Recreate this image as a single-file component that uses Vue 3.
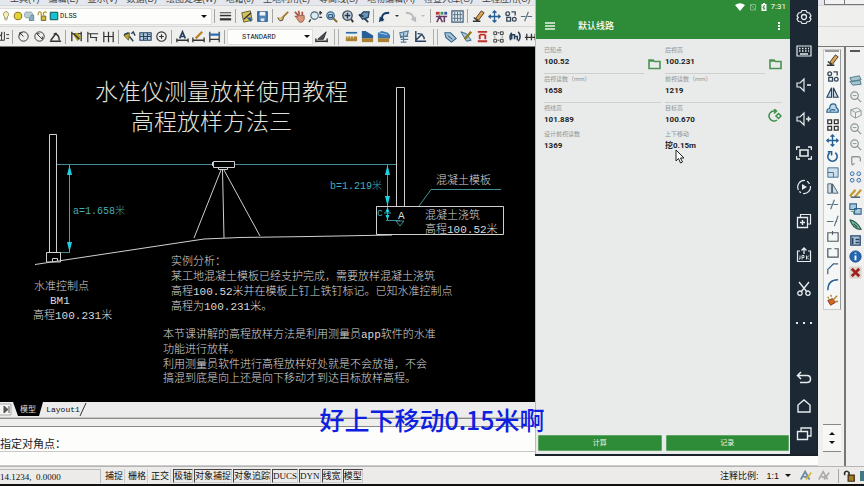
<script setup>
import { ref, h } from 'vue'

const N = '#27405e'
const K = '#333333'
const B = '#2f6da8'
const G = '#8f9698'
const Y = '#b39b3a'
const W = '#e6ebee'

// Each icon is a list of [path, stroke, fill, stroke width] on a 16 x 16 grid.
const icons = {
  angle: [['M2 12 8 4M1 12H10M7 12V3M10 3V12M12 6H15M12 10H15', K]],
  circle: [['M8 3A5 5 0 1 1 8 13 5 5 0 1 1 8 3M4 4 8 8M4 4H7M4 4V7', K]],
  diameter: [['M8 3A5 5 0 1 1 8 13 5 5 0 1 1 8 3M5 5 11 11M5 5H8M11 11V8', K]],
  arcangle: [['M2 13H14M3 12 9 4M6 5Q12 5 12 12', K, 'none', 1.5]],
  quick: [['M3 3V13M13 3V13M3 5H13', K, 'none', 1.4], ['M4 5 9 4 13 9 9 13Z', 'none', '#b4a322'], ['M5 5 11 11', K, 'none', 1.4]],
  base: [['M3 3V14M3 5H14M6 5V9H13M12 9V13', K, 'none', 1.2]],
  cont: [['M3 3V14M8 3V14M13 3V14M3 8H13', K, 'none', 1.3]],
  leader: [['M2 7 8 4 7 12Z', '#68651e', '#c1a72e'], ['M8 8 12 13M10 5 12 3 14 7M2 6 7 4', N, 'none', 1.5]],
  tol: [['M2 4H14V12H2ZM2 8H14M6 4V12M10 4V12', N, '#b9d3eb', 1.2], ['M4 6H5M11 6H13M7 10H9', N]],
  center: [['M8 3A5 5 0 1 1 8 13 5 5 0 1 1 8 3M8 5.500V10.500M5.500 8H10.500', K, 'none', 1.2]],
  dimtext: [['M5 10 8 3 11 10M6 8H10', N, 'none', 1.8], ['M2 10V14M14 10V14M2 12H14', K, 'none', 1.4]],
  dimedit: [['M2 9V14M14 9V14M2 12H14', K, 'none', 1.4], ['M5 10 12 3', '#b98328', 'none', 2.4]],
  dimup: [['M3 3V14M13 3V14M3 11H13', K, 'none', 1.3], ['M2 6H14', B, 'none', 2.4]],
  dimstyle: [['M2 10V14M14 10V14M2 13H14', K, 'none', 1.5], ['M4 11 13 3 10 11Z', K, '#454b4f']],
  ruler: [['M2 4H14', B, 'none', 1.8], ['M2 8H14V13H2Z', 'none', '#aa8232'], ['M4 8V10M7 8V10M10 8V10', '#f1e0a0']],
  area: [['M2 2 6 2 14 7V10H2Z', 'none', '#245f98'], ['M2 10H14V14H2Z', 'none', '#aa8232']],
  volume: [['M2 4 6 2 13 4 15 7V10H2Z', 'none', '#3a79b1'], ['M3 4 12 6', '#abd0ed'], ['M2 10H14V14H2Z', 'none', '#aa8232']],
  list: [['M3 4 12 2 11 7 4 9ZM4 8H12M4 11H12M7 3V13M4 14H10', '#4e7895', '#b7ccdb', 1.2]],
  locate: [['M3 2V13H14M3 12 10 5M5 5A6 6 0 0 1 12 11', N, 'none', 1.5]],
  tag: [['M2 4 8 4 14 10 9 14 3 9Z', '#33658c', '#a7c5da', 1.2], ['M5 7 10 11', N]],
  tagpen: [['M2 3 8 5 13 12 8 13Z', '#33658c', '#a7c5da'], ['M6 11 13 3', '#8f771b', 'none', 2.4]],
  column: [['M3 3H13M5 6H11M5 6V11M11 6V11M3 13H13', '#bd3328', '#e68b7a', 2]],
  block: [['M3 3H6V6H3ZM10 3H13V6H10ZM3 11H6V14H3ZM10 11H13V14H10ZM7 4H9M7 12H9M4 8V9M12 8V9', K]],
  curl: [['M5 4Q2 8 4 12M12 3Q16 8 12 13M5 11V6H8V11M8 8H11V12', N, 'none', 1.6]],
  stretch: [['M2 9H14M4 5V12M9 5V12M13 5V12', K, 'none', 1.4]],
  ltype: [['M2 4H14', K], ['M2 7H14', K, 'none', 1.6], ['M2 11H14', K, 'none', 2.4]],
  note: [['M3 4 12 2 14 12 5 14Z', '#675f2c', '#d4c25a'], ['M5 11 13 4', '#333', 'none', 1.4], ['M8 9 13 14V9Z', 'none', '#2e5f8f']],
  save: [['M3 3H13V13H3Z', '#204f83', '#5185b8', 1.2], ['M5 3H11V7H5Z', 'none', '#eff5fa'], ['M6 10H10V13H6Z', 'none', '#dce8f2']],
  brush: [['M6 10 13 3', '#a5772c', 'none', 2], ['M2 9Q3 14 7 12L8 9', '#4d453a', '#dfba69']],
  pan: [['M3 3 7 7M7 2 8 6M3 8H7M11 3V8', '#a8523f', 'none', 1.8], ['M6 7H13V11L11 14H8L5 10Z', '#9d644d', '#d9967a']],
  zoomrt: [['M7 3A4 4 0 1 1 7 11 4 4 0 1 1 7 3', '#48677e', '#dfe9f0', 1.2], ['M3 11 1 14M12 4H15M13 2V6M12 9H15', K, 'none', 1.4]],
  zoomwin: [['M7 3A4 4 0 1 1 7 11 4 4 0 1 1 7 3', '#386a92', '#bad3e6', 1.3], ['M5 6H9V9H5Z', '#1c4063'], ['M10 10 14 14', '#8c6628', 'none', 2]],
  zoomext: [['M8 2A5 5 0 1 1 8 12 5 5 0 1 1 8 2', '#3e4b55', '#c1cfda', 1.4], ['M8 4V10M5 7H11', '#203850', 'none', 1.5], ['M12 11 14 14', K, 'none', 2]],
  zoomprev: [['M4 7 8 3 14 3 13 9 7 11Z', N, '#6994ba', 1.3], ['M3 6 8 8M9 10 13 14', '#203b57', 'none', 1.8]],
  undo: [['M6 13Q3 4 13 4', '#183963', 'none', 2], ['M3 8 2 14 8 11Z', 'none', '#183963']],
  redo: [['M3 4Q12 4 11 12', '#b7bbbd', 'none', 2], ['M8 11 14 14 14 8Z', 'none', '#b7bbbd']],
  props: [['M2 3H6V6H2Z', 'none', '#c23936'], ['M7 3H10V6H7Z', 'none', '#3c9a4e'], ['M11 3H14V6H11Z', 'none', '#364faa'], ['M2 8H14M3 14 6 8 9 14M11 8V14', '#653b65', 'none', 1.7]],
  grid: [['M2 2H14V14H2Z', '#405c71', '#dce6ed', 1.2], ['M5 3V13M8 3V13M11 3V13M3 6H13M3 10H13', '#58758a']],
  erase: [['M5 10 11 2 14 4 8 12Z', '#4b3926', '#d9a555'], ['M2 13H10M3 9 8 13', '#353535', 'none', 1.5]],
  move: [['M8 2V14M2 8H14M6 4 8 2 10 4M6 12 8 14 10 12M4 6 2 8 4 10M12 6 14 8 12 10', '#285f93', 'none', 1.4]],
  copy: [['M5 3A2 2 0 1 1 5 7 2 2 0 1 1 5 3M12 9A2 2 0 1 1 12 13 2 2 0 1 1 12 9M4 9H8V13H4ZM9 3H13V7', '#38495b', 'none', 1.4]],
  trim: [['M2 8H7M9 8H14M10 3 6 13', '#58707f', 'none', 1.2]],
  extend: [['M2 9H9M11 9H13M14 3 10 14', '#58707f', 'none', 1.2]],
  mirror: [['M2 13 7 3V13ZM14 13 9 3V13Z', N, '#c6dae9', 1.2]],
  offset: [['M2 12Q2 8 5 8 5 3 9 3 12 3 12 7 15 9 14 12ZM5 11Q7 8 11 10', '#2a638e', '#bed8e8', 1.3]],
  array: [['M3 3H7V7H3ZM10 3H14V7H10ZM3 10H7V14H3ZM10 10H14V14H10Z', K, 'none', 1.4]],
  rotate: [['M5 4A5 5 0 1 0 11 4M3 3H7V7', '#285f93', 'none', 1.7]],
  scale: [['M3 3H14V13H3ZM3 8H9V13', '#486f8c', '#cae0ef']],
  shear: [['M3 3V13H7V3ZM8 3 14 13H8Z', '#4c6170', '#cfdde8']],
  break1: [['M3 4H14V13H3ZM8 2V6', '#4c5960', 'none', 1.2]],
  break2: [['M7 4H3V13H14V4H10', '#4c5960', 'none', 1.3]],
  chamfer: [['M3 14V9L9 3H14', '#536068', 'none', 1.3], ['M3 9 9 3', B]],
  fillet: [['M3 14Q3 3 14 3', '#285f93', 'none', 1.5]],
  explode: [['M3 8 8 6 11 10 6 13Z', '#803316', '#d56923'], ['M9 7 13 3M11 9H14M7 4 6 2M4 6 3 4', '#b48524', 'none', 1.5]],
  layers: [['M2 5 12 3 14 7 4 9ZM2 9 13 8 14 12 5 13Z', '#4c7c8b', '#a9c4cf']],
  glass: [['M7 3A4 4 0 1 1 7 11 4 4 0 1 1 7 3M10 10 14 14', G, '#eef0f0', 1.3], ['M5 7H9', G]],
  cube: [['M3 5 10 3 14 6 8 8ZM3 5V11L8 14V8M8 14 14 11V6', G, '#eceeee']],
  turn: [['M4 4V12M4 4H11Q14 4 13 9M7 11 4 13', G, 'none', 1.4]],
  nodes: [['M2.500 5A2 2 0 1 1 6.500 5 2 2 0 1 1 2.500 5M9.500 5A2 2 0 1 1 13.500 5 2 2 0 1 1 9.500 5M2.500 12A2 2 0 1 1 6.500 12 2 2 0 1 1 2.500 12M9.500 12A2 2 0 1 1 13.500 12 2 2 0 1 1 9.500 12', '#356995', '#dceaf5']],
  pens: [['M2 12 8 5M7 13 14 5', '#c59b37', 'none', 2.5], ['M3 13H13', '#345c7e', 'none', 1.5]],
  windows: [['M2 3H9V9H2ZM7 8H14V14H7Z', '#39678a', '#a8cbe0', 1.2], ['M3 11H6V14', '#393']],
  eye: [['M2 3Q9 4 14 13 6 14 2 3M6 7 10 11', '#28604e', '#8dbd9f', 1.3]],
  panel: [['M3 3H13V13H3Z', '#2b456a', '#abc4dc', 1.4], ['M5 5V12M8 7H12M8 10H12', '#28405a', 'none', 1.6]],
  info: [['M8 2A6 6 0 1 1 8 14 6 6 0 1 1 8 2', '#164f92', '#2367b0'], ['M8 7V12M8 4V5', '#fff', 'none', 2]],
  cross: [['M2 2H14V14H2Z', '#ddd6cf', '#ddd6cf'], ['M4 4 12 12M12 4 4 12', '#9f231e', 'none', 3]],
  bulb: [['M8 2A4 4 0 0 1 10 9V11H6V9A4 4 0 0 1 8 2M6 13H10', '#857c62', '#f4f1ad']],
  sun: [['M8 3A5 5 0 1 1 8 13 5 5 0 1 1 8 3', '#8d7922', '#e4d335', 1.5]],
  freeze: [['M6 3A4 4 0 1 1 6 10 4 4 0 1 1 6 3', '#7699a0', '#b9cdd1'], ['M9 7H13V14H7V10', '#587a87', '#8aabb6']],
  unlock: [['M7 8H13V14H7Z', '#6b6228', '#d0bb3c', 1.2], ['M3 7V4Q5 1 7 4V8M10 7V4Q13 1 14 4', Y, 'none', 1.7]],
  swatch: [['M3 3H13V13H3Z', '#174b50', '#12c4cf', 1.3]],
  annot: [['M2 12 7 3 12 12M5 9H10', '#698aa7', 'none', 2], ['M8 12 14 4', '#d5b32e', 'none', 2]],
  annot2: [['M2 12 7 3 12 12M5 9H10M8 12 14 4', '#aaa', 'none', 1.8]],
  lock: [['M7 7H14V14H7Z', '#3b2e17', '#a47c22', 1.4], ['M3 7V4Q5 1 8 4V7', '#2f2c25', 'none', 1.8]],
  gear: [['M6 1.500H10L11 3.500 13.500 4 15 7 13.700 8.500 15 10 13.500 12.500 11 12.700 10 14.500H6L5 12.700 2.500 12.500 1 10 2.300 8.500 1 7 2.500 4 5 3.500Z', W, 'none', 1.2], ['M8 5.500A2.500 2.500 0 1 1 8 10.500 2.500 2.500 0 1 1 8 5.500', W, 'none', 1.3]],
  keyboard: [['M1 3H15V13H1Z', W, 'none', 1.2], ['M3 5.500H4.500M6 5.500H7.500M9 5.500H10.500M12 5.500H13M3 8H4.500M6 8H7.500M9 8H10.500M12 8H13M4 11H12', W, 'none', 1.3]],
  voldown: [['M1 6H4L8 2V14L4 10H1Z', W, 'none', 1.2], ['M11 8H15', W, 'none', 1.6]],
  volup: [['M1 6H4L8 2V14L4 10H1Z', W, 'none', 1.2], ['M10 8H15M12.500 5.500V10.500', W, 'none', 1.6]],
  full: [['M0.500 5V2H4M12 2H15.500V5M15.500 11V14H12M4 14H0.500V11', W, 'none', 1.5], ['M4 5H12V11H4Z', W, 'none', 1.6]],
  play: [['M2.500 11A6.500 6.500 0 0 1 9 1.500M11 2.200A6.500 6.500 0 0 1 13.500 5M14.400 7A6.500 6.500 0 0 1 7 14.500M5 13.800 3.300 12.500', W, 'none', 1.2], ['M6 5 11 8 6 11Z', 'none', W]],
  add: [['M4.500 4V1.500H14.500V11H12', W, 'none', 1.2], ['M1.500 4.500H11.500V14.500H1.500Z', W, 'none', 1.3], ['M4 9.500H9M6.500 7V12', W, 'none', 1.5]],
  install: [['M4 4H1.500V14.500H14.500V4H12', W, 'none', 1.2], ['M8 7V1M5.500 3.500 8 1 10.500 3.500', W, 'none', 1.3], ['M4 8.500V12H2.800M6 12.500V8.500H8V10.500H6M10.500 8.500V12.500M13 8.500 11 10.500 13 12.500', W, 'none', 0.9]],
  cut: [['M3 1 11 11M13 1 5 11', W, 'none', 1.4], ['M4 10A2.200 2.200 0 1 1 3.900 10ZM12 10A2.200 2.200 0 1 1 11.900 10Z', W, 'none', 1.3]],
  more: [['M0 7H2V9H0ZM7 7H9V9H7ZM14 7H16V9H14Z', 'none', W]],
  back: [['M5 2 1.500 5.500 5 9M2 5.500H11Q14.500 5.500 14.500 9T11 12.500H4', W, 'none', 1.5]],
  home: [['M2 14V7L8 2 14 7V14Z', W, 'none', 1.4]],
  recent: [['M5 5V2H15V10H12', W, 'none', 1.3], ['M1.500 5.500H11.500V13.500H1.500Z', W, 'none', 1.4]],
}

const Icon = (props) =>
  h(
    'svg',
    { class: 'ic', viewBox: '0 0 16 16', width: 16, height: 16, 'aria-hidden': 'true' },
    icons[props.name].map(([d, stroke, fill, w]) =>
      h('path', { d, stroke, fill: fill || 'none', 'stroke-width': w || 1 })
    )
  )
Icon.props = ['name']

const menus = ['工具(T)', '编辑(E)', '显示(V)', '数据(D)', '绘图处理(W)', '地籍(J)', '土地利用(L)', '等高线(S)', '地物编辑(A)', '检查入库(G)', '工程应用(C)', '其他应用(M)']
const rowOneA = [['ltype'], ['note', 'save'], ['brush', 'pan', 'zoomrt', 'zoomwin', 'zoomext', 'zoomprev']]
const rowOneB = [['props', 'grid'], ['erase', 'move', 'copy', 'trim']]
const rowTwoA = [['angle'], ['circle', 'diameter', 'arcangle'], ['quick', 'base', 'cont'], ['leader', 'tol', 'center'], ['dimtext', 'dimedit', 'dimup']]
const measure = [['ruler', 'area', 'volume'], ['list', 'locate']]
const modify = ['tag', 'tagpen', 'column', 'block', 'curl', 'stretch']
const editTools = ['erase', 'copy', 'mirror', 'offset', 'array', 'move', 'rotate', 'scale', 'shear', 'trim', 'extend', 'break1', 'break2', 'chamfer', 'fillet', 'explode']
const viewTools = ['layers', 'glass', 'cube', 'glass', 'glass', 'turn', 'nodes', 'pens', 'windows', 'eye', 'panel', 'info', 'cross']
const toggles = [
  ['捕捉', false], ['栅格', false], ['正交', false], ['极轴', true], ['对象捕捉', true],
  ['对象追踪', true], ['DUCS', true], ['DYN', true], ['线宽', true], ['模型', true],
]
const dock = ['gear', 'keyboard', 'voldown', 'volup', 'full', 'play', 'add', 'install', 'cut', 'more']
const nav = ['back', 'home', 'recent']

const fields = ref([
  { id: 'known', label: '已知点', value: '100.52', icon: 'folder', line: true },
  { id: 'back-h', label: '后视高', value: '100.231', icon: 'folder', line: true },
  { id: 'back-r', label: '后视读数（mm）', value: '1658', line: true },
  { id: 'fore-r', label: '前视读数（mm）', value: '1219', line: true },
  { id: 'sight', label: '视线高', value: '101.889' },
  { id: 'target', label: '目标高', value: '100.670', icon: 'refresh' },
  { id: 'design', label: '设计前视读数', value: '1369' },
  { id: 'shift', label: '上下移动', value: '挖0.15m' },
])
const command = ref('')
</script>

<template>
  <div class="desktop">
    <div class="cad">
      <nav class="menu">
        <span v-for="m in menus" :key="m">{{ m }}</span>
        <i class="panes"></i>
      </nav>

      <div class="bar bar-one">
        <div class="layer">
          <Icon name="bulb" /><Icon name="sun" /><Icon name="freeze" /><Icon name="unlock" /><Icon name="swatch" />
          <select aria-label="图层"><option>DLSS</option></select>
          <i class="caret"></i>
        </div>
        <template v-for="(g, i) in rowOneA" :key="'a' + i">
          <i class="sep"></i>
          <button v-for="n in g" :key="n" class="tool" :aria-label="n"><Icon :name="n" /></button>
        </template>
        <i class="sep"></i>
        <button class="tool" aria-label="放弃"><Icon name="undo" /></button>
        <span class="drop"><i class="caret small"></i></span>
        <button class="tool" aria-label="重做"><Icon name="redo" /></button>
        <span class="drop"><i class="caret small dim"></i></span>
        <template v-for="(g, i) in rowOneB" :key="'b' + i">
          <i class="sep"></i>
          <button v-for="n in g" :key="n" class="tool" :aria-label="n"><Icon :name="n" /></button>
        </template>
      </div>

      <div class="bar bar-two">
        <template v-for="(g, i) in rowTwoA" :key="'c' + i">
          <i v-if="i" class="sep"></i>
          <button v-for="n in g" :key="n" class="tool" :aria-label="n"><Icon :name="n" /></button>
        </template>
        <i class="sep"></i>
        <div class="style-box">
          <select aria-label="标注样式"><option>STANDARD</option></select>
          <i class="caret"></i>
        </div>
        <button class="tool" aria-label="dimstyle"><Icon name="dimstyle" /></button>
        <i class="grip"></i>
        <template v-for="(g, i) in measure" :key="'d' + i">
          <i v-if="i" class="sep"></i>
          <button v-for="n in g" :key="n" class="tool" :aria-label="n"><Icon :name="n" /></button>
        </template>
        <i class="grip"></i>
        <button v-for="n in modify" :key="n" class="tool" :aria-label="n"><Icon :name="n" /></button>
      </div>

      <div class="body">
        <div class="work">
          <div class="canvas">
            <svg class="drawing" width="536" height="355" viewBox="0 47 536 355">
              <g class="sight">
                <path d="M57 164.500H213M235 164.500H396M57 252.500H70M376 206.500H388M386 220.500H400" />
                <path d="M396 221 404 221 400 226ZM419 206 431 189.500H501" />
              </g>
              <g class="arrow">
                <path d="M69.500 165V252M387.500 165V220M384 213H391" />
                <path class="head" d="M69.500 165 72 175H67ZM69.500 252 72 242H67ZM387.500 165 390 175H385ZM387.500 206 390 196H385ZM387.500 207 389.500 212H385.500ZM387.500 220 389.500 215H385.500Z" />
              </g>
              <g class="ink">
                <path d="M49.500 252V134.500H56.500V252M46.500 252.500H60.500V262H46.500ZM52.500 262V258.500H57.500V261" />
                <path d="M396.500 206V87.500H404.500V206M376.500 206.500H503.500V234.500H376.500Z" />
                <path d="M213.500 161.500H234.500V167.500H213.500ZM212.500 162V166M218.500 167.500V169.500H227.500V167.500" />
                <path d="M221 170 194 238M222.500 170 224 238M224 170 260 236" />
                <path d="M35 264.500 204 239 240 237.500 310 236.500 392 235" />
              </g>
              <g class="title">
                <text x="95" y="100">水准仪测量放样使用教程</text>
                <text x="131" y="130">高程放样方法三</text>
              </g>
              <g class="dim">
                <text x="73" y="214">a=1.658米</text>
                <text x="330" y="189">b=1.219米</text>
                <text x="377" y="216">c</text>
              </g>
              <g class="note">
                <text x="398" y="219">A</text>
                <text x="436" y="184">混凝土模板</text>
                <text x="425" y="219">混凝土浇筑</text>
                <text x="425" y="233">高程100.52米</text>
                <text x="34" y="290">水准控制点</text>
                <text x="50" y="304">BM1</text>
                <text x="33" y="319">高程100.231米</text>
                <text x="171" y="265">实例分析：</text>
                <text x="171" y="280">某工地混凝土模板已经支护完成，需要放样混凝土浇筑</text>
                <text x="171" y="295">高程100.52米并在模板上钉上铁钉标记。已知水准控制点</text>
                <text x="171" y="310">高程为100.231米。</text>
                <text x="163" y="338">本节课讲解的高程放样方法是利用测量员app软件的水准</text>
                <text x="163" y="353">功能进行放样。</text>
                <text x="163" y="368">利用测量员软件进行高程放样好处就是不会放错，不会</text>
                <text x="163" y="382">搞混到底是向上还是向下移动才到达目标放样高程。</text>
              </g>
            </svg>
          </div>
          <div class="tabs">
            <svg class="strip" width="90" height="15" viewBox="0 0 90 15" aria-hidden="true">
              <path d="M-1 2H11V13H-1Z" fill="#f4f4f2" stroke="#aaa" />
              <path d="M4 4V11L8 7.500ZM9 4V11" fill="#555" stroke="#555" />
              <path d="M13 0H43L39 14H18Z" fill="#000" />
              <path d="M80 14 86 1" stroke="#333" />
            </svg>
            <button class="tab on">模型</button>
            <button class="tab">Layout1</button>
          </div>
          <div class="split"></div>
          <div class="console">
            <p>指定对角点：</p>
            <input v-model="command" aria-label="命令" />
          </div>
        </div>
        <aside class="side">
          <div class="palette">
            <i class="bars"></i>
            <button v-for="n in editTools" :key="n" class="tool" :aria-label="n"><Icon :name="n" /></button>
          </div>
          <div class="scroller"><i class="up"></i><i class="caret"></i></div>
        </aside>
        <aside class="edge">
          <i class="knob"></i>
          <button v-for="(n, i) in viewTools" :key="i" class="tool" :aria-label="n"><Icon :name="n" /></button>
        </aside>
      </div>

      <footer class="status">
        <output class="coords">14.1234,&nbsp; 0.0000</output>
        <button v-for="[t, on] in toggles" :key="t" :class="['toggle', { on }]">{{ t }}</button>
        <span class="scale-label">注释比例:</span>
        <span class="ratio">1:1</span>
        <i class="caret"></i>
        <Icon name="annot" /><Icon name="annot2" />
        <i class="sep"></i>
        <Icon name="lock" />
        <i class="chip"></i>
      </footer>
    </div>

    <section class="phone">
      <div class="screen">
        <header class="head">
          <div class="system">
            <svg width="10" height="8" viewBox="0 0 10 8"><path d="M0 2Q5-1.500 10 2L5 8Z" fill="#fff" /></svg>
            <svg width="8" height="8" viewBox="0 0 8 8"><path d="M1.500 1.500H6.500V7H1.500ZM1.500 1.500 6.500 7" fill="none" stroke="#7db883" /></svg>
            <svg width="6" height="8" viewBox="0 0 6 8"><path d="M.5 1H2V0H4V1H5.500V8H.5Z" fill="#fff" /><path d="M3.500 2 2 5H4L2.500 7" fill="none" stroke="#2e8b37" /></svg>
            <span>7:31</span>
          </div>
          <div class="appbar">
            <button class="plain" aria-label="菜单">
              <svg width="10" height="8" viewBox="0 0 10 8"><path d="M0 1H10M0 4H10M0 7H10" stroke="#e8f5e9" stroke-width="1.300" /></svg>
            </button>
            <h1>默认线路</h1>
            <button class="plain" aria-label="更多">
              <svg width="4" height="10" viewBox="0 0 4 10"><path d="M1 1H3V3H1ZM1 4H3V6H1ZM1 7H3V9H1Z" fill="#fff" /></svg>
            </button>
          </div>
        </header>
        <form class="fields" @submit.prevent>
          <div v-for="f in fields" :key="f.id" :class="['field', { line: f.line }]">
            <div class="entry">
              <label :for="f.id">{{ f.label }}</label>
              <input :id="f.id" v-model="f.value" />
            </div>
            <button v-if="f.icon === 'folder'" class="plain folder" type="button" aria-label="选择">
              <svg width="13" height="12" viewBox="0 0 13 12"><path d="M1 10.500V2H5L6.500 3.500H12V10.500ZM1 3H6" fill="none" stroke="#4a9352" stroke-width="1.600" /></svg>
            </button>
            <button v-if="f.icon === 'refresh'" class="plain" type="button" aria-label="刷新">
              <svg width="14" height="14" viewBox="0 0 14 14"><path d="M9 11A5 5 0 1 1 6 2H8M6 0 8.500 2 6 4.500M10.500 4.500 13 7 10.500 9.500 8 7Z" fill="none" stroke="#3f8f48" stroke-width="1.500" /></svg>
            </button>
          </div>
        </form>
        <div class="actions">
          <button>计算</button>
          <button>记录</button>
        </div>
      </div>
      <div class="dock">
        <button v-for="n in dock" :key="n" class="dock-btn" :aria-label="n"><Icon :name="n" /></button>
        <div class="nav">
          <button v-for="n in nav" :key="n" class="nav-btn" :aria-label="n"><Icon :name="n" /></button>
        </div>
      </div>
      <svg class="pointer" width="10" height="15" viewBox="0 0 10 15"><path d="M1 1V12L3.500 9.500 5.500 14 7.500 13 5.500 9H9Z" fill="#fff" stroke="#222" /></svg>
    </section>

    <p class="caption">好上下移动0.15米啊</p>
  </div>
</template>

<style>
body { background: #000; }
</style>

<style scoped>
* { box-sizing: border-box; }
button, input, select { margin: 0; padding: 0; border: 0; background: none; font: inherit; color: inherit; }
p, h1 { margin: 0; font-weight: 400; }
.desktop { position: relative; height: 100vh; overflow: hidden; font-family: "Liberation Sans", "Noto Sans CJK SC", sans-serif; color: #222; }
.cad { display: flex; flex-direction: column; height: 100%; background: #eeefee; border-bottom: 2px solid #111; }
.menu { display: flex; align-items: flex-end; gap: 9px; flex: none; height: 5px; padding-left: 10px; overflow: hidden; background: #e4e8ee; color: #444; font: 9px/11px "Liberation Sans", "Noto Sans CJK SC", sans-serif; white-space: nowrap; }
.menu span { flex: none; }
.panes { flex: none; width: 40px; height: 5px; margin-left: auto; border: solid #777; border-width: 0 0 1px 1px; background: linear-gradient(90deg, #f2f2f2 48%, #777 48%, #777 52%, #f2f2f2 52%); }

.bar { display: flex; align-items: center; flex: none; background: #efefee; }
.bar-one { height: 22px; border-top: 1px solid #d4d6d8; border-bottom: 1px solid #d6d6d4; }
.bar-two { height: 20px; border-bottom: 1px solid #777; margin-left: -6px; }
.tool { display: flex; justify-content: center; align-items: center; flex: none; width: 16px; height: 16px; }
.ic { display: block; flex: none; width: 15px; height: 15px; }
.sep { flex: none; width: 1px; height: 14px; margin: 0 2px; background: #a5a5a3; }
.grip { flex: none; width: 5px; height: 16px; margin: 0 4px 0 5px; border: solid #b0b0ae; border-width: 0 1px; }
.drop { display: flex; justify-content: center; width: 10px; }
.caret { flex: none; width: 0; height: 0; border: solid transparent; border-width: 3px 3px 0; border-top-color: #111; }
.caret.small { border-width: 2px 2px 0; border-top-color: #333; }
.caret.dim { border-top-color: #bbb; }
.layer { display: flex; align-items: center; width: 212px; height: 17px; padding-right: 4px; background: #fdfdfb; border: 1px solid #ddd; border-left: 0; }
.layer .ic { width: 12px; height: 14px; }
.layer select { flex: 1; }
select { appearance: none; min-width: 0; font: 7px/12px "Liberation Mono", monospace; color: #111; }
.style-box { display: flex; align-items: center; width: 86px; height: 16px; padding: 0 2px 0 14px; background: #fdfdfb; border: 1px solid #ddd; }
.style-box select { flex: 1; }

.body { display: flex; flex: 1; min-height: 0; }
.work { display: flex; flex-direction: column; flex: 1; min-width: 0; }
.canvas { flex: 1; min-height: 0; overflow: hidden; background: #000; margin-right: 2px; }
.drawing { display: block; }
.drawing path { fill: none; stroke-width: 1; }
.ink path { stroke: #d0d0d0; }
.sight path { stroke: #3f8f96; }
.arrow path { stroke: #20b4c2; }
.arrow .head { fill: #20d0e0; stroke: none; }
.drawing text { font-family: "Liberation Mono", "Noto Sans CJK SC", monospace; font-weight: 300; fill: #d8d8d8; }
.title text { font-size: 23px; fill: #e2e2dc; }
.note text { font-size: 11px; }
.dim text { font-size: 10px; fill: #45aeb8; }

.tabs { position: relative; display: flex; flex: none; height: 16px; padding-left: 13px; background: #ececec; border-bottom: 1px solid #c8c8c8; }
.strip { position: absolute; left: 0; top: 0; }
.tab { position: relative; width: 30px; font: 8px/12px "Liberation Mono", "Noto Sans CJK SC", monospace; color: #111; }
.tab + .tab { width: 40px; }
.tab.on { color: #ddd; }
.split { flex: none; height: 9px; border: solid #8a8a8a; border-width: 1px 0; background: #eeeeed; }
.console { flex: none; height: 39px; background: #fdfdfc; border-bottom: 1px solid #ccc; }
.console p { height: 25px; padding: 8px 0 0; border-bottom: 1px solid #c8c8c8; font: 11px/16px "Noto Sans CJK SC", sans-serif; }
.console input { display: block; width: 100%; height: 13px; font-size: 10px; }

.side { display: flex; flex-direction: column; flex: none; width: 28px; border-right: 2px solid #777; padding: 2px 3px 0 5px; background: #efefee; }
.palette { display: flex; flex-direction: column; justify-content: space-between; align-items: center; height: 261px; border: 1px solid #ccc; border-right-color: #999; background: #f5f6f6; padding-bottom: 4px; }
.bars { width: 14px; height: 4px; border: solid #999; border-width: 1px 0; }
.scroller { display: flex; flex-direction: column; justify-content: space-evenly; align-items: center; height: 28px; margin: auto 0 14px; background: #f7f7f6; border: solid #888; border-width: 1px 0; }
.up { border: solid transparent; border-width: 0 3px 3px; border-bottom-color: #111; }
.edge { display: flex; flex-direction: column; justify-content: space-between; align-items: center; flex: none; width: 18px; height: 233px; background: #f0f0f0; }
.knob { width: 10px; height: 5px; margin: 3px 0 20px; border: 1px solid #555; background: #fff; }

.status { display: flex; align-items: center; flex: none; height: 18px; border-top: 1px solid #b5b5b5; background: #ecebe9; font: 9px/12px "Liberation Sans", "Noto Sans CJK SC", sans-serif; color: #111; white-space: nowrap; }
.coords { width: 101px; height: 14px; margin-right: 3px; padding-top: 1px; border: solid #bbb; border-width: 1px 1px 0 0; font: 9px/12px "Liberation Serif", serif; }
.toggle { height: 14px; margin-right: 2px; padding: 0 1px; border-right: 1px solid #ccc; }
.toggle.on { margin-right: 1px; padding: 0; border: 1px solid #ccc; border-top-color: #444; border-left-color: #444; font: 8px/12px "Liberation Serif", "Noto Sans CJK SC", serif; font-size: 9px; }
.scale-label { margin-left: auto; }
.ratio { margin: 0 6px 0 8px; }
.status .caret { margin-right: 8px; }
.status .ic { width: 14px; height: 14px; margin-right: 4px; }
.status .sep { margin: 0 3px; }
.chip { width: 4px; height: 10px; background: #3f7785; }

.phone { position: absolute; top: 0; right: 46px; display: flex; width: 283px; height: 456px; border: solid #1a2128; border-width: 0 1px 2px 0; }
.screen { display: flex; flex-direction: column; flex: 1; background: #e9ebeb; border-left: 1px solid #b8bcbc; font-family: Roboto, "Noto Sans CJK SC", sans-serif; }
.head { height: 39px; background: #2e8b37; color: #fff; }
.system { display: flex; justify-content: flex-end; align-items: center; gap: 4px; height: 13px; padding-right: 4px; font-size: 8px; line-height: 12px; }
.appbar { display: flex; align-items: center; height: 25px; padding: 0 9px; }
.appbar h1 { flex: 1; margin-left: 23px; font-size: 9px; line-height: 14px; font-weight: 500; }
.plain { display: flex; align-items: center; justify-content: center; }
.folder { padding-top: 8px; }
.fields { display: grid; grid-template-columns: 1fr 1fr; column-gap: 4px; padding: 6px 8px 0; }
.field { display: flex; align-items: center; gap: 4px; height: 26px; }
.field.line { height: 29px; }
.entry { flex: 1; height: 100%; min-width: 0; }
.field.line .entry { border-bottom: 1px solid #cdcfcf; }
.entry label { display: block; font-size: 6px; line-height: 10px; color: #8f9393; white-space: nowrap; }
.entry input { display: block; width: 100%; height: 14px; font-size: 8px; line-height: 14px; font-weight: 700; color: #222; }
.actions { display: flex; gap: 4px; margin-top: auto; padding: 0 1px 3px 2px; }
.actions button { flex: 1; height: 16px; background: #2e8b37; border: 1px solid #5fa566; border-radius: 1px; color: #e8f5e9; font-size: 7px; line-height: 12px; }
.dock { display: flex; flex-direction: column; flex: none; width: 27px; background: #1c2833; }
.dock-btn { display: flex; align-items: center; justify-content: center; height: 34px; }
.dock .ic { width: 16px; height: 16px; }
.nav { display: flex; flex-direction: column; margin-top: auto; padding-bottom: 6px; }
.nav-btn { display: flex; align-items: center; justify-content: center; height: 28px; }
.pointer { position: absolute; left: 140px; top: 149px; }
.caption { position: absolute; left: 0; right: 0; top: 401px; text-align: center; font: 500 25px/36px "Noto Sans CJK SC", sans-serif; color: #0d20e2; }
</style>
